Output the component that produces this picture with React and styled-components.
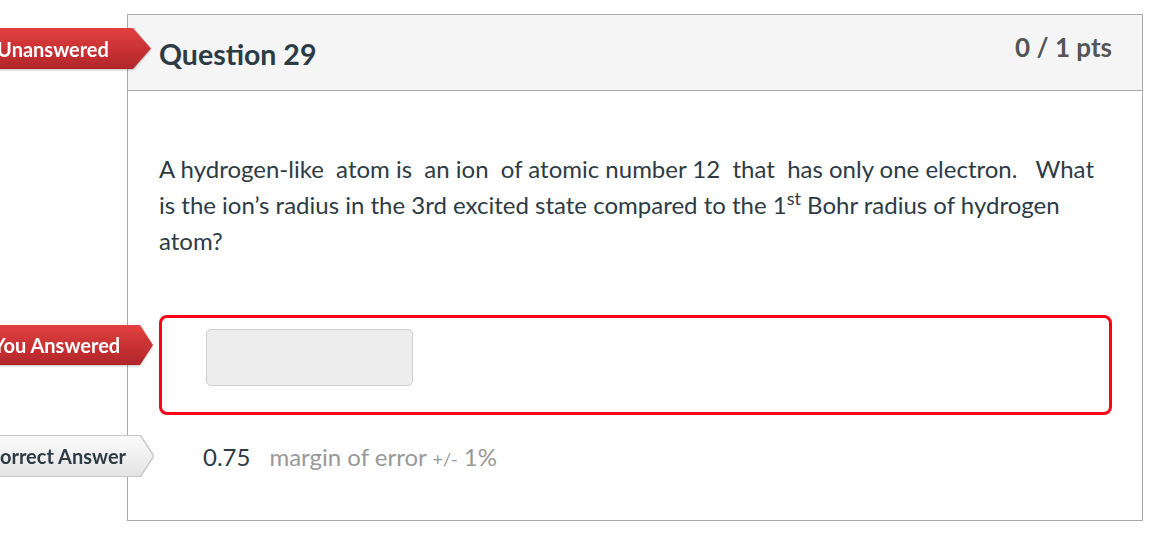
import styled, { createGlobalStyle } from 'styled-components';

const GlobalStyle = createGlobalStyle`
  html, body {
    margin: 0;
    padding: 0;
    background: #fff;
  }
  body {
    font-family: 'Lato', 'Noto Sans', sans-serif;
    color: #2d3b45;
    overflow: hidden;
  }
`;

const Page = styled.div`
  padding: 14px 0 0 127px;
  width: 1016px;
`;

const Card = styled.div`
  position: relative;
  border: 1px solid #aaaaaa;
  background: #fff;
`;

const Header = styled.div`
  position: relative;
  display: flex;
  justify-content: space-between;
  align-items: flex-start;
  height: 76px;
  box-sizing: border-box;
  padding: 17px 30px 0 31px;
  background: #f5f5f5;
  border-bottom: 1px solid #aaaaaa;
`;

const Title = styled.h2`
  margin: 5px 0 0;
  font-size: 28.5px;
  line-height: 34px;
  font-weight: 700;
  color: #2d3b45;
`;

const Points = styled.div`
  font-size: 26px;
  line-height: 30px;
  font-weight: 700;
  color: #555555;
`;

const RibbonWrap = styled.div`
  position: absolute;
  top: ${(p) => p.$top}px;
  left: -155px;
  z-index: 2;
  filter: ${(p) =>
    p.$variant === 'neutral'
      ? 'drop-shadow(1px 0 0 #c6c6c6) drop-shadow(-1px 0 0 #c6c6c6) drop-shadow(0 1px 0 #c6c6c6) drop-shadow(0 -1px 0 #c6c6c6)'
      : 'drop-shadow(0 1px 1px rgba(0,0,0,0.25))'};
`;

const RibbonShape = styled.div`
  display: flex;
  align-items: center;
  justify-content: center;
  box-sizing: border-box;
  width: ${(p) => p.$body + p.$arrow}px;
  height: ${(p) => p.$height}px;
  padding-right: ${(p) => p.$arrow}px;
  clip-path: ${(p) =>
    `polygon(0 0, ${p.$body}px 0, 100% 50%, ${p.$body}px 100%, 0 100%)`};
  background: ${(p) =>
    p.$variant === 'neutral'
      ? 'linear-gradient(#fbfbfb, #e4e4e4)'
      : 'linear-gradient(#e2403f, #b1252a)'};
  color: ${(p) => (p.$variant === 'neutral' ? '#2d3b45' : '#ffffff')};
  font-size: 20px;
  font-weight: 700;
  white-space: nowrap;
`;

function Ribbon({ label, variant = 'wrong', top = 0, body = 167, arrow = 13, height = 40 }) {
  return (
    <RibbonWrap $top={top} $variant={variant}>
      <RibbonShape $variant={variant} $body={body} $arrow={arrow} $height={height}>
        {label}
      </RibbonShape>
    </RibbonWrap>
  );
}

const QuestionText = styled.p`
  margin: 0;
  padding: 60px 30px 0 31px;
  font-size: 24px;
  line-height: 36px;
  color: #2d3b45;
  white-space: pre-wrap;

  sup {
    font-size: 0.75em;
    line-height: 0;
  }
`;

const AnswerRow = styled.div`
  position: relative;
  padding: 0 30px 0 31px;
  margin-top: ${(p) => p.$gap}px;
`;

const AnswerBox = styled.div`
  box-sizing: border-box;
  height: 100px;
  border: 3px solid #ff0019;
  border-radius: 8px;
  padding: 11px 0 0 44px;
`;

const BlankInput = styled.div`
  box-sizing: border-box;
  width: 207px;
  height: 57px;
  background: #ededed;
  border: 1px solid #cfcfcf;
  border-radius: 5px;
`;

const CorrectLine = styled.div`
  display: flex;
  align-items: center;
  height: 40px;
  padding-left: 44px;
  margin-bottom: 44px;
  font-size: 24px;
`;

const AnswerValue = styled.span`
  color: #2d3b45;
`;

const Margin = styled.span`
  margin-left: 19px;
  color: #999999;
`;

const Small = styled.span`
  font-size: 0.75em;
`;

export default function App() {
  return (
    <>
      <GlobalStyle />
      <Page>
        <Card>
          <Header>
            <Ribbon label="Unanswered" top={13} body={160} arrow={18} height={41} />
            <Title>Question 29</Title>
            <Points>0 / 1 pts</Points>
          </Header>
          <QuestionText>
            {'A hydrogen-like  atom is  an ion  of atomic number 12  that  has only one electron.   What is the ion\u2019s radius in the 3rd excited state compared to the 1'}
            <sup>st</sup>
            {' Bohr radius of hydrogen atom?'}
          </QuestionText>
          <AnswerRow $gap={56}>
            <Ribbon label="You Answered" top={10} />
            <AnswerBox>
              <BlankInput />
            </AnswerBox>
          </AnswerRow>
          <AnswerRow $gap={21}>
            <Ribbon label="Correct Answer" variant="neutral" top={0} />
            <CorrectLine>
              <AnswerValue>0.75</AnswerValue>
              <Margin>
                margin of error <Small>+/-</Small> 1%
              </Margin>
            </CorrectLine>
          </AnswerRow>
        </Card>
      </Page>
    </>
  );
}
